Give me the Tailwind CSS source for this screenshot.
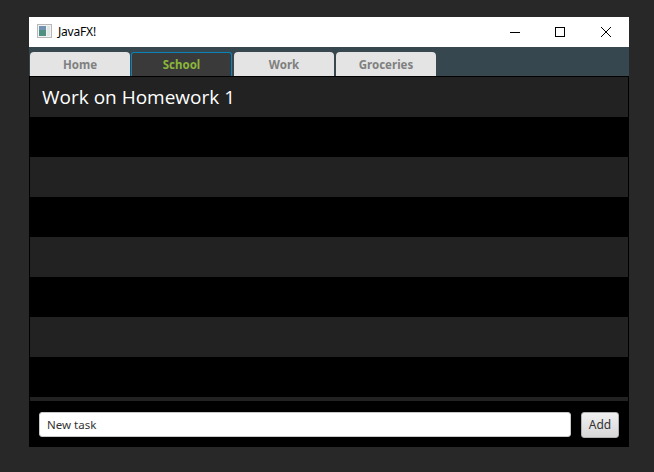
<!DOCTYPE html>
<html>
<head>
<script src="https://cdn.jsdelivr.net/npm/@tailwindcss/browser@4"></script>
</head>
<body class="w-[654px] h-[472px] bg-[#282828] overflow-hidden font-['Open_Sans',sans-serif]">
<div class="pt-[17px] pl-[29px]">
  <div class="w-[600px] h-[430px] flex flex-col bg-black">
    <div class="h-[30px] bg-white flex items-center pl-[8px] text-black">
      <svg width="16" height="16" viewBox="0 0 16 16" class="shrink-0">
        <rect x="0.5" y="0.5" width="14" height="13" fill="#f2f2f2" stroke="#b8b8b8"/>
        <rect x="2" y="2" width="7" height="10" fill="#4f9080"/>
        <rect x="2" y="2" width="7" height="4" fill="#6f93b0"/>
        <rect x="10" y="2" width="3" height="10" fill="#dfe8e4"/>
      </svg>
      <span class="ml-[5px] text-[12px] leading-none tracking-[-0.2px] font-['Noto_Sans',sans-serif]">JavaFX!</span>
      <div class="ml-auto flex items-center h-full">
        <div class="w-[46px] h-full flex items-center justify-center pl-[2px]">
          <div class="w-[10px] h-px bg-black"></div>
        </div>
        <div class="w-[46px] h-full flex items-center justify-center">
          <div class="w-[10px] h-[10px] border border-black"></div>
        </div>
        <div class="w-[46px] h-full flex items-center justify-center">
          <svg width="10" height="10" viewBox="0 0 10 10"><path d="M0 0L10 10M10 0L0 10" stroke="#000" stroke-width="1" fill="none"/></svg>
        </div>
      </div>
    </div>
    <div class="h-[29px] bg-[#37474f] flex items-end pl-[1px] text-[11.5px] font-bold leading-none font-['Noto_Sans',sans-serif]">
      <div class="w-[100px] h-[24px] pt-[1px] bg-[#e4e4e4] rounded-t-[4px] text-[#808080] flex items-center justify-center">Home</div>
      <div class="w-[101px] h-[24px] pt-[1px] ml-[1px] bg-[#3a3a3a] rounded-t-[3px] border border-b-0 border-[#0a84b8] text-[#8bb63a] flex items-center justify-center">School</div>
      <div class="w-[100px] h-[24px] pt-[1px] ml-[2px] bg-[#e4e4e4] rounded-t-[4px] text-[#808080] flex items-center justify-center">Work</div>
      <div class="w-[100px] h-[24px] pt-[1px] ml-[2px] bg-[#e4e4e4] rounded-t-[4px] text-[#808080] flex items-center justify-center">Groceries</div>
    </div>
    <div class="border-t border-x border-black flex flex-col flex-1 min-h-0">
      <div class="h-[40px] bg-[#222222] flex items-center pl-[12px] text-white text-[19px] leading-none">Work on Homework 1</div>
      <div class="h-[40px] bg-black"></div>
      <div class="h-[40px] bg-[#222222]"></div>
      <div class="h-[40px] bg-black"></div>
      <div class="h-[40px] bg-[#222222]"></div>
      <div class="h-[40px] bg-black"></div>
      <div class="h-[40px] bg-[#222222]"></div>
      <div class="h-[40px] bg-black"></div>
      <div class="h-[4px] bg-[#222222]"></div>
      <div class="flex-1 flex items-start pt-[11px] pl-[9px] pr-[9px] gap-[10px]">
        <input value="New task" class="w-[532px] h-[25px] bg-white rounded-[3px] border border-[#c8c8c8] pl-[7px] text-[11.5px] text-[#333] font-['Noto_Sans',sans-serif] outline-none">
        <button class="w-[38px] h-[26px] rounded-[3px] border border-[#b0b0b0] bg-gradient-to-b from-[#f0f0f0] to-[#d8d8d8] text-[12px] text-[#333] font-['Noto_Sans',sans-serif] leading-none">Add</button>
      </div>
    </div>
  </div>
</div>
</body>
</html>
